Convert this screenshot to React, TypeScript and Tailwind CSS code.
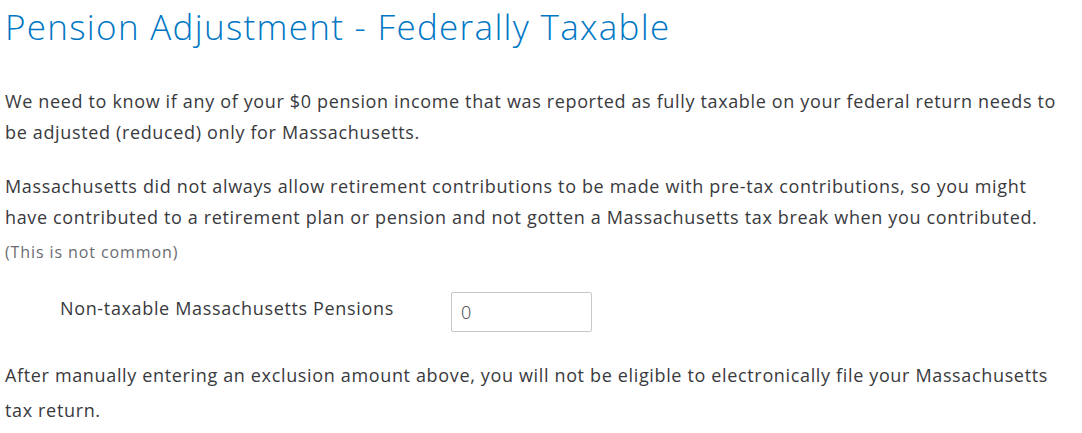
export default function App() {
  return (
    <div className="min-h-screen bg-white pl-[5px] pr-[17px] pt-[4px] text-[#393a3d] font-['Open_Sans','Liberation_Sans',sans-serif]">
      <h1 className="text-[35px] font-light leading-[46px] tracking-[1.3px] text-[#0077c5]">
        Pension Adjustment - Federally Taxable
      </h1>

      <p className="mt-[36px] text-[18px] leading-[31px] tracking-[0.65px]">
        We need to know if any of your $0 pension income that was reported as fully taxable on your federal return needs to be adjusted (reduced) only for Massachusetts.
      </p>

      <p className="mt-[23px] text-[18px] leading-[31px] tracking-[0.65px]">
        Massachusetts did not always allow retirement contributions to be made with pre-tax contributions, so you might have contributed to a retirement plan or pension and not gotten a Massachusetts tax break when you contributed.
      </p>
      <p className="pt-[2px] text-[16px] leading-[34px] tracking-[0.9px] text-[#6b6c72]">(This is not common)</p>

      <div className="mt-[23px] flex items-center">
        <label className="w-[446px] pb-[8px] pl-[55px] text-[18px] leading-[31px] tracking-[0.65px]">
          Non-taxable Massachusetts Pensions
        </label>
        <input
          type="text"
          defaultValue="0"
          className="h-[40px] w-[141px] rounded-[2px] border border-[#c7c7c7] px-[9px] text-[18px] font-light text-[#393a3d] outline-none"
        />
      </div>

      <p className="mt-[26px] text-[18px] leading-[35px] tracking-[0.65px]">
        After manually entering an exclusion amount above, you will not be eligible to electronically file your Massachusetts tax return.
      </p>
    </div>
  );
}
